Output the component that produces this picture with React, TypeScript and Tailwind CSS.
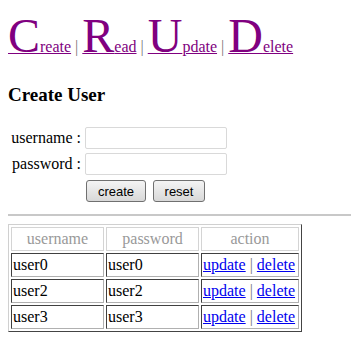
const users = [
  { name: 'user0', pwd: 'user0' },
  { name: 'user2', pwd: 'user2' },
  { name: 'user3', pwd: 'user3' },
];

const nav = [
  { big: 'C', rest: 'reate' },
  { big: 'R', rest: 'ead' },
  { big: 'U', rest: 'pdate' },
  { big: 'D', rest: 'elete' },
];

const cell =
  'h-[24px] border border-t-[#404040] border-l-[#404040] border-r-[#b0b0b0] border-b-[#b0b0b0] p-0 pl-[1px]';

export default function App() {
  return (
    <div className="min-h-screen bg-white p-2 font-['Liberation_Serif',serif] text-base text-black">
      <div className="mt-[4px] whitespace-nowrap leading-none">
        {nav.map((n, i) => (
          <span key={n.big}>
            {i > 0 && <span className="text-[#777]"> | </span>}
            <a href="#" className="text-[#800080] underline">
              <span className="text-[48px]">{n.big}</span>
              {n.rest}
            </a>
          </span>
        ))}
      </div>

      <h3 className="mt-[24px] text-[19px] font-bold leading-[22px]">Create User</h3>

      <form className="mt-[21px] flex flex-col gap-[4px] leading-[18px]">
        <div className="flex items-center gap-[4px]">
          <label className="w-[73px] text-right">username :</label>
          <input className="h-[22px] w-[142px] rounded-[2px] border border-[#d9d9d9] bg-white" />
        </div>
        <div className="flex items-center gap-[4px]">
          <label className="w-[73px] text-right">password :</label>
          <input type="password" className="h-[22px] w-[142px] rounded-[2px] border border-[#d9d9d9] bg-white" />
        </div>
        <div className="mt-[1px] flex gap-[7px] pl-[78px]">
          <button type="button" className="h-[22px] w-[60px] rounded-[3px] border border-[#707070] bg-gradient-to-b from-[#f4f4f4] to-[#d8d8d8] font-['Liberation_Sans',sans-serif] text-[13px] leading-none">
            create
          </button>
          <button type="reset" className="h-[22px] w-[52px] rounded-[3px] border border-[#707070] bg-gradient-to-b from-[#f4f4f4] to-[#d8d8d8] font-['Liberation_Sans',sans-serif] text-[13px] leading-none">
            reset
          </button>
        </div>
      </form>

      <hr className="mt-[12px] -mr-2 border-t-2 border-[#c8c8c8]" />

      <table className="mt-[8px] border-separate border-spacing-[2px] border border-t-[#d0d0d0] border-l-[#d0d0d0] border-r-[#444] border-b-[#444] leading-[18px]">
        <thead>
          <tr>
            {['username', 'password', 'action'].map((h, i) => (
              <th
                key={h}
                className={`h-[24px] border border-[#d4d4d4] p-0 text-center font-normal text-[#999] ${i === 2 ? 'w-[98px]' : 'w-[93px]'}`}
              >
                {h}
              </th>
            ))}
          </tr>
        </thead>
        <tbody>
          {users.map(u => (
            <tr key={u.name}>
              <td className={cell}>{u.name}</td>
              <td className={cell}>{u.pwd}</td>
              <td className={cell}>
                <a href="#" className="text-[#0000ee] underline">update</a>
                <span className="text-[#777]"> | </span>
                <a href="#" className="text-[#0000ee] underline">delete</a>
              </td>
            </tr>
          ))}
        </tbody>
      </table>
    </div>
  );
}
